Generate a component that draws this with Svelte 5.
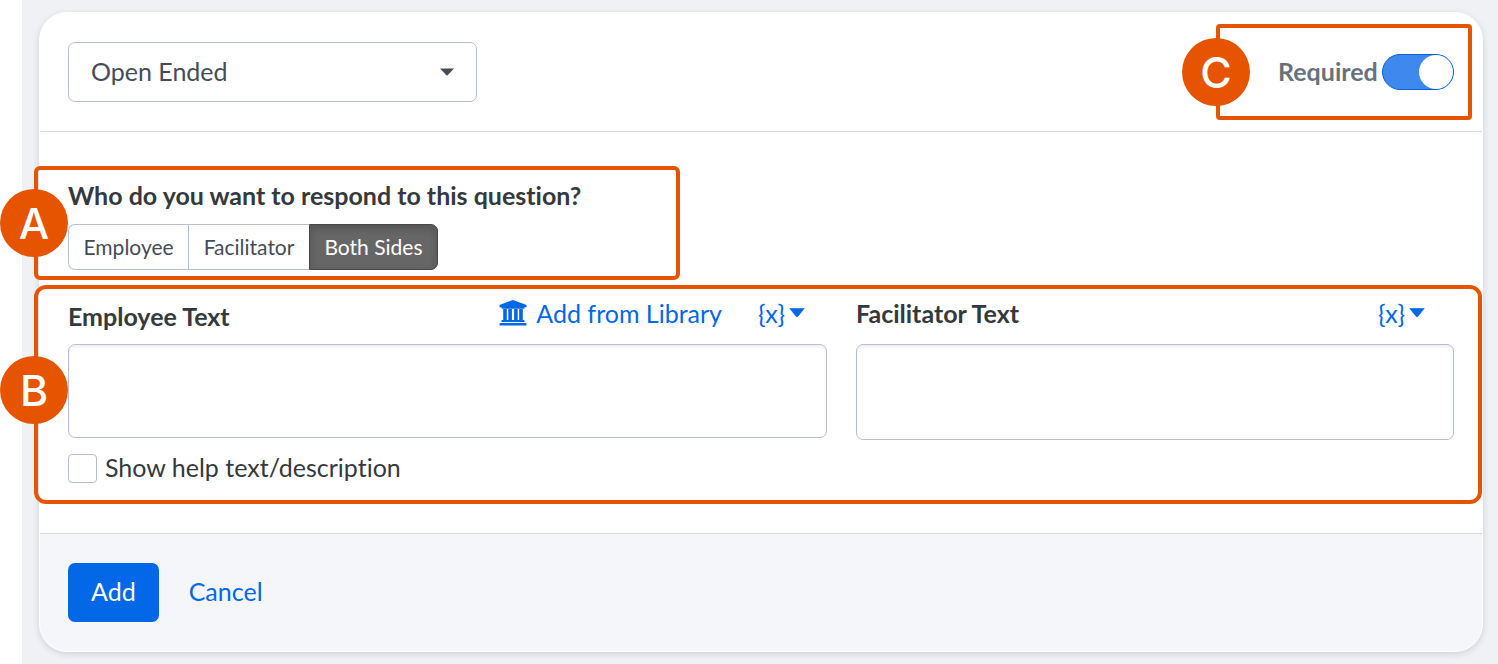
<script>
  let questionType = $state('open');
  let required = $state(true);
  let audience = $state('both');
  let showHelp = $state(false);
  let employeeText = $state('');
  let facilitatorText = $state('');

  const audiences = [
    { id: 'employee', label: 'Employee' },
    { id: 'facilitator', label: 'Facilitator' },
    { id: 'both', label: 'Both Sides' }
  ];
</script>

{#snippet callout(letter, kind)}
  <div class="callout {kind}">
    <span class="badge">{letter}</span>
  </div>
{/snippet}

{#snippet variableMenu(name)}
  <button type="button" class="link variable" aria-label="Insert variable in {name}">
    <span>{'{x}'}</span>
    <svg width="16" height="10" viewBox="0 0 16 10" aria-hidden="true">
      <path d="M.8.5h14.4L8.8 8.500q-.8.700-1.600 0z" fill="currentColor" stroke="currentColor" stroke-width=".6" />
    </svg>
  </button>
{/snippet}

<main class="page">
  <form class="card" onsubmit={(e) => e.preventDefault()}>
    <header class="top">
      <div class="select">
        <select aria-label="Question type" bind:value={questionType}>
          <option value="open">Open Ended</option>
        </select>
        <svg width="14" height="8" viewBox="0 0 14 8" aria-hidden="true">
          <path d="M0 .5h14L7.600 7.200q-.6.600-1.200 0z" fill="#464c55" />
        </svg>
      </div>
      <div class="required">
        <label for="required">Required</label>
        <input id="required" class="toggle" type="checkbox" role="switch" bind:checked={required} />
        {@render callout('C', 'callout-c')}
      </div>
    </header>

    <div class="body">
      <section class="audience">
        <h2 id="audience-title">Who do you want to respond to this question?</h2>
        <div class="segments" role="group" aria-labelledby="audience-title">
          {#each audiences as item}
            <button
              type="button"
              class:active={audience === item.id}
              aria-pressed={audience === item.id}
              onclick={() => (audience = item.id)}>{item.label}</button>
          {/each}
        </div>
        {@render callout('A', 'callout-a')}
      </section>

      <section class="texts">
        <div class="column">
          <div class="row">
            <label class="title low" for="employee-text">Employee Text</label>
            <div class="tools">
              <button type="button" class="link library">
                <svg width="28" height="26" viewBox="0 0 28 26" fill="currentColor" aria-hidden="true">
                  <path d="M14 0 27.500 5v2.200H25.500v.8q0 .8-.8.8H3.300q-.8 0-.8-.8v-.8H.5V5z" />
                  <path d="M4.200 9h3.600v11h1.500V9h3.600v11h2.200V9h3.600v11h1.500V9h3.600v11h.9q.8 0 .8.8V22h-23v-1.200q0-.8.8-.8h.9z" />
                  <path d="M1.700 23h24.600q1.200 0 1.200 1v1.500H.5V24q0-1 1.200-1z" />
                </svg>
                <span>Add from Library</span>
              </button>
              {@render variableMenu('employee text')}
            </div>
          </div>
          <textarea id="employee-text" bind:value={employeeText}></textarea>
          <div class="help">
            <input id="show-help" type="checkbox" bind:checked={showHelp} />
            <label for="show-help">Show help text/description</label>
          </div>
        </div>
        <div class="column">
          <div class="row facilitator">
            <label class="title" for="facilitator-text">Facilitator Text</label>
            {@render variableMenu('facilitator text')}
          </div>
          <textarea id="facilitator-text" class="tall" bind:value={facilitatorText}></textarea>
        </div>
        {@render callout('B', 'callout-b')}
      </section>
    </div>

    <footer>
      <button type="submit" class="add">Add</button>
      <button type="button" class="link cancel">Cancel</button>
    </footer>
  </form>
</main>

<style>
  :global(body) {
    background: #fff;
  }

  .page {
    box-sizing: border-box;
    min-height: 100vh;
    margin-left: 22px;
    padding: 12px 15px 12px 17px;
    background: #f0f1f5;
    color: #34393d;
    font-family: Lato, sans-serif;
    font-size: 25px;
    font-variant-ligatures: none;
    line-height: 28px;
  }

  button, select, textarea {
    font: inherit;
    margin: 0;
  }

  input {
    margin: 0;
  }

  button {
    cursor: pointer;
  }

  .card {
    border: 1px solid #fff;
    border-radius: 28px;
    background: #fff;
    box-shadow: 0 2px 6px rgba(40, 45, 60, 0.16);
  }

  .top {
    display: flex;
    justify-content: space-between;
    padding: 29px 28px;
    border-bottom: 1px solid #d9dce1;
  }

  .select {
    display: grid;
    align-items: center;
    width: 409px;
  }

  .select > * {
    grid-area: 1 / 1;
  }

  .select svg {
    justify-self: end;
    margin-right: 23px;
    pointer-events: none;
  }

  select {
    appearance: none;
    width: 100%;
    height: 60px;
    padding: 0 48px 2px 22px;
    border: 1px solid #b3bfd8;
    border-radius: 7px;
    background: #fff;
    color: #464c55;
  }

  .required {
    position: relative;
    display: flex;
    align-items: center;
    color: #68727f;
    font-weight: 700;
  }

  .required label {
    min-width: 104px;
    padding-bottom: 2px;
  }

  .toggle {
    appearance: none;
    display: flex;
    box-sizing: border-box;
    width: 72px;
    height: 36px;
    border: 1px solid #0b5fd6;
    border-radius: 18px;
    background: #8c96a3;
  }

  .toggle::before {
    content: '';
    width: 34px;
    border-radius: 50%;
    background: #fff;
  }

  .toggle:checked {
    justify-content: flex-end;
    background: #3f88ee;
  }

  .body {
    display: grid;
    gap: 29px;
    padding: 49px 28px 50px;
  }

  .audience, .texts {
    position: relative;
  }

  h2 {
    margin: 0 0 15px;
    font-size: 25px;
    line-height: 28px;
    font-weight: 700;
  }

  .segments {
    display: flex;
    width: 370px;
  }

  .segments button {
    flex: 1 1 auto;
    height: 46px;
    padding: 0;
    border: 1px solid #b3bfd8;
    border-right-width: 0;
    background: #fff;
    color: #464c55;
    font-size: 21px;
  }

  .segments button:first-child {
    border-radius: 7px 0 0 7px;
  }

  .segments button:last-child {
    border-right-width: 1px;
    border-radius: 0 7px 7px 0;
  }

  .segments button.active {
    border-color: #46484a;
    background: #666;
    box-shadow: inset 0 3px 8px rgba(0, 0, 0, 0.18);
    color: #fff;
  }

  .texts {
    display: grid;
    grid-template-columns: 33fr 26fr;
    gap: 29px;
  }

  .row {
    display: flex;
    justify-content: space-between;
    height: 33px;
    margin-bottom: 12px;
    padding-right: 22px;
  }

  .row.facilitator {
    padding-right: 29px;
  }

  .title {
    font-weight: 700;
  }

  .low {
    padding-top: 3px;
  }

  .tools {
    display: flex;
    gap: 36px;
  }

  .link {
    display: flex;
    align-items: center;
    height: 28px;
    padding: 0;
    border: 0;
    background: none;
    color: #0268e8;
  }

  .library {
    gap: 9px;
  }

  .variable {
    gap: 4px;
  }

  textarea {
    display: block;
    box-sizing: border-box;
    width: 100%;
    height: 94px;
    padding: 12px 22px;
    border: 1px solid #b3bfd8;
    border-radius: 7px;
    background: #fff;
    box-shadow: inset 0 2px 3px rgba(0, 0, 0, 0.07);
    resize: none;
  }

  textarea.tall {
    height: 96px;
  }

  .help {
    display: flex;
    gap: 8px;
    height: 29px;
    margin-top: 16px;
  }

  .help input {
    appearance: none;
    box-sizing: border-box;
    width: 29px;
    height: 29px;
    border: 1px solid #b3bfd8;
    border-radius: 4px;
    background: #fff;
  }

  .help input:checked {
    background: #0268e8;
  }

  .help label {
    line-height: 26px;
  }

  footer {
    display: flex;
    align-items: center;
    gap: 30px;
    padding: 29px 28px;
    border-top: 1px solid #d5dade;
    border-radius: 0 0 27px 27px;
    background: #f5f6f9;
  }

  .add,
  .cancel {
    height: 59px;
    padding-bottom: 4px;
  }

  .add {
    padding-right: 23px;
    padding-left: 23px;
    border: 0;
    border-radius: 7px;
    background: #0268e8;
    color: #fff;
  }

  /* Lettered callouts drawn over the form */
  .callout {
    position: absolute;
    box-sizing: border-box;
    border: 4px solid #e65400;
    border-radius: 6px;
    pointer-events: none;
  }

  .callout-a {
    top: -15px;
    bottom: -10px;
    left: -34px;
    width: 646px;
  }

  .callout-b {
    top: -14px;
    right: -28px;
    bottom: -21px;
    left: -34px;
    border-radius: 12px;
  }

  .callout-c {
    top: -18px;
    right: -18px;
    bottom: -18px;
    left: -62px;
    border-radius: 4px;
  }

  .badge {
    position: absolute;
    top: 50%;
    left: -4px;
    display: grid;
    place-items: center;
    width: 68px;
    height: 68px;
    margin: -34px;
    border-radius: 50%;
    background: #e65400;
    color: #fff;
    font-family: Inter, sans-serif;
    font-size: 43px;
    font-weight: 500;
  }

  .callout-b .badge {
    top: 48%;
  }
</style>
